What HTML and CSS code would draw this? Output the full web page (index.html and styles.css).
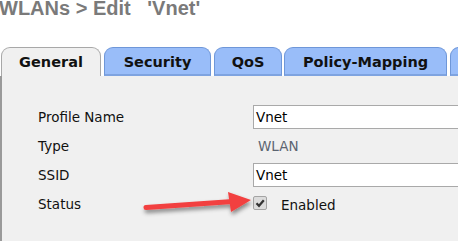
FILE: index.html
```html
<!DOCTYPE html>
<html>
<head>
<meta charset="utf-8">
<link rel="stylesheet" href="styles.css">
</head>
<body>
<div class="page">
  <h1 class="title">WLANs &gt; Edit &nbsp;&nbsp;'Vnet'</h1>
  <div class="tabs">
    <div class="tab active">General</div>
    <div class="tab tab-security">Security</div>
    <div class="tab tab-qos">QoS</div>
    <div class="tab tab-policy">Policy-Mapping</div>
    <div class="tab tab-more"></div>
  </div>
  <div class="panel">
    <div class="form">
      <div class="label">Profile Name</div>
      <div class="value"><div class="input">Vnet</div></div>
      <div class="label">Type</div>
      <div class="value"><span class="static">WLAN</span></div>
      <div class="label">SSID</div>
      <div class="value"><div class="input">Vnet</div></div>
      <div class="label">Status</div>
      <div class="value check-row">
        <span class="checkbox">
          <svg width="10" height="10" viewBox="0 0 10 10"><path d="M1.5 5.2 L4 7.8 L8.8 2.2" fill="none" stroke="#333" stroke-width="2.2"/></svg>
        </span>
        <span class="check-label">Enabled</span>
      </div>
    </div>
  </div>
  <svg class="arrow" width="130" height="40" viewBox="0 0 130 40">
    <defs>
      <filter id="sh" x="-20%" y="-50%" width="140%" height="200%">
        <feDropShadow dx="1" dy="3" stdDeviation="2" flood-color="#000" flood-opacity="0.45"/>
      </filter>
    </defs>
    <g filter="url(#sh)">
      <path d="M6 20.5 L93 14.5" stroke="#f2403f" stroke-width="5" stroke-linecap="round" fill="none"/>
      <path d="M88 5 L111 13 L91 25 Z" fill="#f2403f"/>
    </g>
  </svg>
</div>
</body>
</html>
```

FILE: styles.css
```css
html, body {
  margin: 0;
  padding: 0;
  background: #ffffff;
  overflow: hidden;
}

.page {
  position: relative;
  width: 458px;
  height: 241px;
  overflow: hidden;
}

.title {
  margin: -3px 0 0 -1px;
  font-family: "Liberation Sans", Arial, sans-serif;
  font-weight: bold;
  font-size: 20px;
  line-height: 22px;
  color: #7a7a7a;
  white-space: nowrap;
}

.tabs {
  display: flex;
  align-items: flex-end;
  margin-top: 28px;
  padding-left: 1px;
  gap: 2px;
  height: 29px;
  white-space: nowrap;
}

.tab {
  box-sizing: border-box;
  height: 29px;
  padding-top: 4px;
  text-align: center;
  font-family: "DejaVu Sans", Verdana, sans-serif;
  font-weight: bold;
  font-size: 14.5px;
  line-height: 20px;
  color: #111;
  background: #99bdf9;
  border: 1px solid #6f97d8;
  border-bottom: 2px solid #7ea3e0;
  border-radius: 9px 9px 0 0;
  flex: none;
}

.tab.active {
  width: 100px;
  background: #f0f0f0;
  border-color: #a8a8a8;
  border-bottom: none;
}

.tab-security { width: 107px; margin-left: 1px; }
.tab-qos { width: 68px; margin-left: 1px; }
.tab-policy { width: 163px; }
.tab-more { width: 100px; margin-left: 1px; }

.panel {
  height: 170px;
  background: #f0f0f0;
  border-left: 2px solid #9a9a9a;
}

.form {
  display: grid;
  grid-template-columns: 215px 1fr;
  grid-auto-rows: 29px;
  padding: 26px 0 0 36px;
  font-family: "DejaVu Sans", Verdana, sans-serif;
  font-size: 13.5px;
  align-items: center;
}

.label {
  color: #111;
  white-space: nowrap;
}

.value {
  white-space: nowrap;
}

.input {
  box-sizing: border-box;
  height: 24px;
  width: 260px;
  background: #fff;
  border: 1px solid #a9a9a9;
  padding: 2px 0 0 2px;
  line-height: 18px;
  color: #000;
}

.static {
  display: inline-block;
  padding-left: 5px;
  color: #5c6470;
}

.check-row {
  display: flex;
  align-items: center;
}

.checkbox {
  box-sizing: border-box;
  width: 14px;
  height: 14px;
  border: 1px solid #a4a4a4;
  border-radius: 2px;
  background: #dcdcdc;
  display: flex;
  align-items: center;
  justify-content: center;
  margin-top: -1px;
}

.check-label {
  margin-left: 14px;
  color: #111;
  padding-top: 2px;
}

.arrow {
  position: absolute;
  left: 140px;
  top: 187px;
}
```
